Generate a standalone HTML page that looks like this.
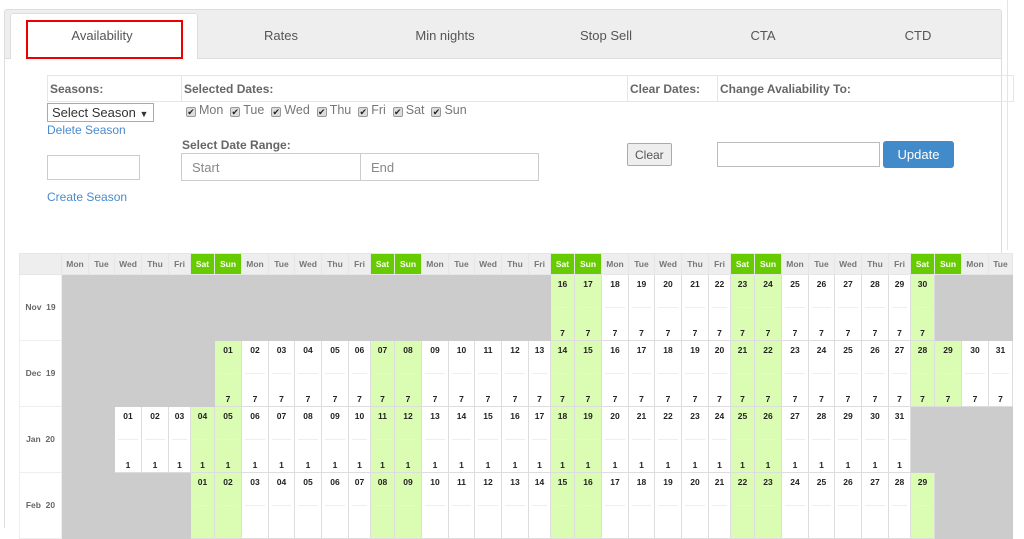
<!DOCTYPE html>
<html><head><meta charset="utf-8"><style>
*{box-sizing:border-box}
body{margin:0;width:1024px;height:525px;overflow:hidden;background:#fff;font-family:"Liberation Sans",Arial,sans-serif;position:relative}
.abs{position:absolute}
.tabbar{left:4px;top:9px;width:998px;height:50px;background:#eee;border:1px solid #ddd;border-bottom:1px solid #ddd;border-radius:3px 3px 0 0}
.tab{position:absolute;top:28px;font-size:13px;color:#555;transform:translateX(-50%)}
.lbl{font-size:12px;font-weight:bold;color:#666}
.hc{position:absolute;top:75px;height:27px;border:1px solid #e6e6e6;border-right:none;padding:6px 2px}
.inp{position:absolute;border:1px solid #ccc;background:#fff}
.lnk{position:absolute;font-size:12px;color:#4a8acc}
.cb{display:inline-block;width:10px;height:10px;background:#ddd;border:1px solid #999;border-radius:2px;font-size:9px;line-height:9px;text-align:center;color:#222;vertical-align:-1px;margin-right:3px}
table{position:absolute;left:19px;top:253px;border-collapse:collapse;table-layout:fixed}
td{padding:0;font-size:8.5px;font-weight:bold;color:#222;text-align:center;border:1px solid #ddd}
th{height:21px;font-size:8.5px;font-weight:bold;color:#777;background:#eee;border:1px solid #e6e6e6}
th.w{background:#66cc00;color:#fff}
td.g{background:#ccc;border-color:#ccc}
td.e{background:#fff}
td.s{background:#dbfcb3}
td.m{color:#666;background:#fff;border-color:#eee}
.c{height:65px;position:relative}
.c .d{position:absolute;top:4px;left:0;right:0}
.c .l{position:absolute;top:32px;left:3px;right:3px;border-top:1px solid #eee}
.c .v{position:absolute;top:53px;left:0;right:0}
</style></head><body>
<div class="abs" style="left:4px;top:58px;width:998px;height:470px;border-left:1px solid #ddd;border-right:1px solid #ddd"></div>
<div class="abs" style="left:1007px;top:0;width:1px;height:250px;background:#e4e4e4"></div>
<div class="abs tabbar"></div>
<div class="abs" style="left:10px;top:13px;width:188px;height:46px;background:#fff;border:1px solid #ddd;border-bottom:none;border-radius:3px 3px 0 0"></div>
<div class="abs" style="left:26px;top:20px;width:157px;height:39px;border:2px solid #e00"></div>
<div class="tab" style="left:102px">Availability</div>
<div class="tab" style="left:281px">Rates</div>
<div class="tab" style="left:445px">Min nights</div>
<div class="tab" style="left:606px">Stop Sell</div>
<div class="tab" style="left:763px">CTA</div>
<div class="tab" style="left:918px">CTD</div>

<div class="hc lbl" style="left:47px;width:134px">Seasons:</div>
<div class="hc lbl" style="left:181px;width:446px">Selected Dates:</div>
<div class="hc lbl" style="left:627px;width:90px">Clear Dates:</div>
<div class="hc lbl" style="left:717px;width:297px;border-right:1px solid #e6e6e6">Change Avaliability To:</div>

<div class="inp" style="left:47px;top:103px;width:107px;height:19px;border-color:#aaa;font-size:13px;color:#333;padding:1px 4px">Select Season <span style="font-size:9px">▼</span></div>
<div class="lnk" style="left:47px;top:123px">Delete Season</div>
<div class="inp" style="left:47px;top:155px;width:93px;height:25px"></div>
<div class="lnk" style="left:47px;top:190px">Create Season</div>

<div class="abs" style="left:186px;top:103px;font-size:12.5px;color:#777"><span class="cb">✔</span>Mon&nbsp; <span class="cb">✔</span>Tue&nbsp; <span class="cb">✔</span>Wed&nbsp; <span class="cb">✔</span>Thu&nbsp; <span class="cb">✔</span>Fri&nbsp; <span class="cb">✔</span>Sat&nbsp; <span class="cb">✔</span>Sun</div>
<div class="abs lbl" style="left:182px;top:138px">Select Date Range:</div>
<div class="inp" style="left:181px;top:153px;width:180px;height:28px;font-size:13px;color:#888;padding:6px 10px">Start</div>
<div class="inp" style="left:360px;top:153px;width:179px;height:28px;font-size:13px;color:#888;padding:6px 10px">End</div>

<div class="inp" style="left:627px;top:143px;width:45px;height:23px;background:#eee;border-color:#aaa;border-radius:2px;font-size:12px;color:#555;padding:4px 7px">Clear</div>
<div class="inp" style="left:717px;top:142px;width:163px;height:25px;border-color:#bbb"></div>
<div class="abs" style="left:883px;top:141px;width:71px;height:27px;background:#428bca;border-radius:3px;color:#fff;font-size:13px;text-align:center;line-height:28px">Update</div>

<table id="t"></table>
<script>
var W=[27,26,27,27,22,24,27],N=["Mon","Tue","Wed","Thu","Fri","Sat","Sun"];
var h='<colgroup><col style="width:42px">';
for(var i=0;i<37;i++)h+='<col style="width:'+(i==36?24:W[i%7])+'px">';
h+='</colgroup><tr><th style="background:#eee"></th>';
for(var i=0;i<37;i++){var w=i%7>=5;h+='<th class="'+(w?'w':'')+'">'+N[i%7]+'</th>';}
h+='</tr>';
var M=[["Nov  19",19,16,30,"7"],["Dec  19",6,1,31,"7"],["Jan  20",2,1,31,"1"],["Feb  20",5,1,29,""]];
M.forEach(function(m){
 h+='<tr><td class="m"><div class="c" style="line-height:65px;color:#666">'+m[0].replace(" ","&nbsp;")+'</div></td>';
 for(var i=0;i<37;i++){var day=i-m[1]+m[2];
  if(day<m[2]||day>m[3]){h+='<td class="g"><div class="c"></div></td>';continue;}
  var dd=(m[0][0]=="N"?String(day):(day<10?"0"+day:""+day));
  h+='<td class="'+(i%7>=5?'s':'e')+'"><div class="c"><div class="d">'+dd+'</div><div class="l"></div><div class="v">'+m[4]+'</div></div></td>';}
 h+='</tr>';});
document.getElementById('t').innerHTML=h;
</script>
</body></html>
